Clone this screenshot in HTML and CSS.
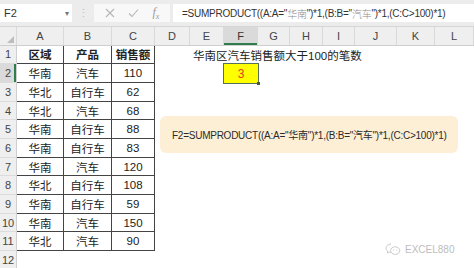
FILE: index.html
```html
<!DOCTYPE html>
<html lang="zh-CN">
<head>
    <meta charset="UTF-8">
    <meta name="viewport" content="width=device-width, initial-scale=1.0">
    <title>SUMPRODUCT 多条件计数</title>
    <link rel="stylesheet" href="styles.css">
</head>
<body>
    <div class="window">
        <div class="toolbar">
            <div class="namebox"><span>F2</span><span class="caret">▾</span></div>
            <div class="grip">⋮</div>
            <div class="fx-tools">
                <svg width="10" height="10" viewBox="0 0 10 10"><path d="M1 1L9 9M9 1L1 9" stroke="#b5b5b5" stroke-width="1.1" fill="none"/></svg>
                <svg width="11" height="10" viewBox="0 0 11 10"><path d="M1 5.5L4 8.5L10 1.5" stroke="#b5b5b5" stroke-width="1.1" fill="none"/></svg>
                <span class="fx">f<sub>x</sub></span>
            </div>
            <div class="formula">=SUMPRODUCT((A:A="<span class="cjk-serif">华南</span>")*1,(B:B="<span class="cjk-serif">汽车</span>")*1,(C:C&gt;100)*1)</div>
        </div>

        <div class="sheet">
            <div class="row head">
                <div class="corner"><span class="tri"></span></div>
                <div>A</div><div>B</div><div>C</div><div>D</div><div>E</div>
                <div class="active-col">F</div>
                <div>G</div><div>H</div><div>I</div><div>J</div><div>K</div><div>L</div>
            </div>
            <div class="row">
                <div class="rn">1</div>
                <div class="cell th">区域</div><div class="cell th">产品</div><div class="cell th">销售额</div>
                <div></div>
                <div class="note">华南区汽车销售额大于100的笔数</div>
            </div>
            <div class="row">
                <div class="rn active-row">2</div>
                <div class="cell">华南</div><div class="cell">汽车</div><div class="cell">110</div>
                <div></div><div></div>
                <div class="result">3</div>
            </div>
            <div class="row"><div class="rn">3</div><div class="cell">华北</div><div class="cell">自行车</div><div class="cell">62</div></div>
            <div class="row"><div class="rn">4</div><div class="cell">华北</div><div class="cell">汽车</div><div class="cell">68</div></div>
            <div class="row"><div class="rn">5</div><div class="cell">华南</div><div class="cell">自行车</div><div class="cell">88</div></div>
            <div class="row"><div class="rn">6</div><div class="cell">华南</div><div class="cell">自行车</div><div class="cell">83</div></div>
            <div class="row"><div class="rn">7</div><div class="cell">华南</div><div class="cell">汽车</div><div class="cell">120</div></div>
            <div class="row"><div class="rn">8</div><div class="cell">华北</div><div class="cell">自行车</div><div class="cell">108</div></div>
            <div class="row"><div class="rn">9</div><div class="cell">华南</div><div class="cell">自行车</div><div class="cell">59</div></div>
            <div class="row"><div class="rn">10</div><div class="cell">华南</div><div class="cell">汽车</div><div class="cell">150</div></div>
            <div class="row"><div class="rn">11</div><div class="cell">华北</div><div class="cell">汽车</div><div class="cell">90</div></div>
            <div class="row"><div class="rn">12</div></div>

            <div class="callout">F2=SUMPRODUCT((A:A="华南")*1,(B:B="汽车")*1,(C:C&gt;100)*1)</div>

            <div class="watermark">
                <svg width="16" height="13" viewBox="0 0 16 13"><path d="M6 1C3 1 1 3 1 5.2c0 1.3.7 2.4 1.8 3.1L2.4 10l2-1c.5.1 1 .2 1.6.2" stroke="#c4c4c4" stroke-width="0.9" fill="none"/><ellipse cx="10.2" cy="7.6" rx="4.6" ry="3.8" stroke="#c4c4c4" stroke-width="0.9" fill="#fff"/><circle cx="8.6" cy="7" r="0.6" fill="#c4c4c4"/><circle cx="11.8" cy="7" r="0.6" fill="#c4c4c4"/></svg>
                <span>EXCEL880</span>
            </div>
        </div>
    </div>
</body>
</html>
```

FILE: styles.css
```css
body { margin: 0; background: #fff; font-family: "Liberation Sans", "Noto Sans CJK SC", sans-serif; color: #222; overflow: hidden; }
.window { width: 474px; height: 268px; overflow: hidden; }

.toolbar { height: 27px; box-sizing: border-box; display: flex; align-items: center; background: #ececec; border-bottom: 1px solid #d6d6d6; font-size: 11px; }
.namebox { width: 72px; height: 18px; box-sizing: border-box; background: #fff; display: flex; align-items: center; justify-content: space-between; padding: 0 3px 0 4px; color: #333; }
.namebox .caret { font-size: 8px; color: #777; }
.grip { width: 22px; text-align: center; color: #c0c0c0; font-size: 11px; }
.fx-tools { width: 76px; height: 18px; background: #f8f8f8; display: flex; align-items: center; justify-content: space-around; padding: 0 4px; box-sizing: border-box; }
.fx { font-family: "Liberation Serif", serif; font-style: italic; color: #9a9a9a; font-size: 12px; }
.fx sub { font-size: 8px; }
.formula { flex: 1; height: 18px; margin-left: 3px; background: #fff; padding-left: 9px; display: flex; align-items: center; color: #333; white-space: nowrap; font-size: 10px; letter-spacing: -0.25px; }
.cjk-serif { color: #8a8a8a; font-weight: 300; }

.sheet { position: relative; }
.row { display: grid; grid-template-columns: 17px 47px 48px 43px 35px 34px 34px 32px 33px 32px 42px 38px 39px; height: 18.7px; font-size: 11px; }
.row > div { display: flex; align-items: center; justify-content: center; box-sizing: border-box; }

.head { height: 17.6px; background: #efefef; color: #444; border-bottom: 1px solid #cfcfcf; }
.head > div { border-right: 1px solid #d9d9d9; }
.corner { position: relative; }
.tri { position: absolute; right: 2px; bottom: 2px; width: 0; height: 0; border-left: 7px solid transparent; border-bottom: 7px solid #bdbdbd; }
.active-col { background: #dadada; color: #333; box-shadow: inset 0 -2px 0 #2f7d4a; }

.rn { background: #efefef; color: #444; border-right: 1px solid #cfcfcf; border-bottom: 1px solid #dcdcdc; }
.active-row { background: #dadada; box-shadow: inset -2px 0 0 #2f7d4a; }

.cell { border-right: 1px solid #444; border-bottom: 1px solid #444; font-size: 11.5px; color: #222; }
.th { font-weight: bold; }

.note { justify-content: flex-start !important; padding-left: 3px; white-space: nowrap; overflow: visible; font-size: 11.5px; color: #222; }
.result { background: #ffff00; color: #e2401c; font-size: 12px; outline: 1px solid #56705a; position: relative; }
.result::after { content: ""; position: absolute; right: -2px; bottom: -2px; width: 3px; height: 3px; background: #3d5c42; }

.callout { position: absolute; left: 160px; top: 89px; width: 298px; height: 37px; box-sizing: border-box; background: #fdefd5; border-radius: 6px; display: flex; align-items: center; padding-left: 12px; font-size: 10px; letter-spacing: -0.25px; color: #2a2a2a; white-space: nowrap; }

.watermark { position: absolute; left: 385px; top: 216px; display: flex; align-items: center; gap: 4px; color: #bdbdbd; font-size: 10px; }
```
